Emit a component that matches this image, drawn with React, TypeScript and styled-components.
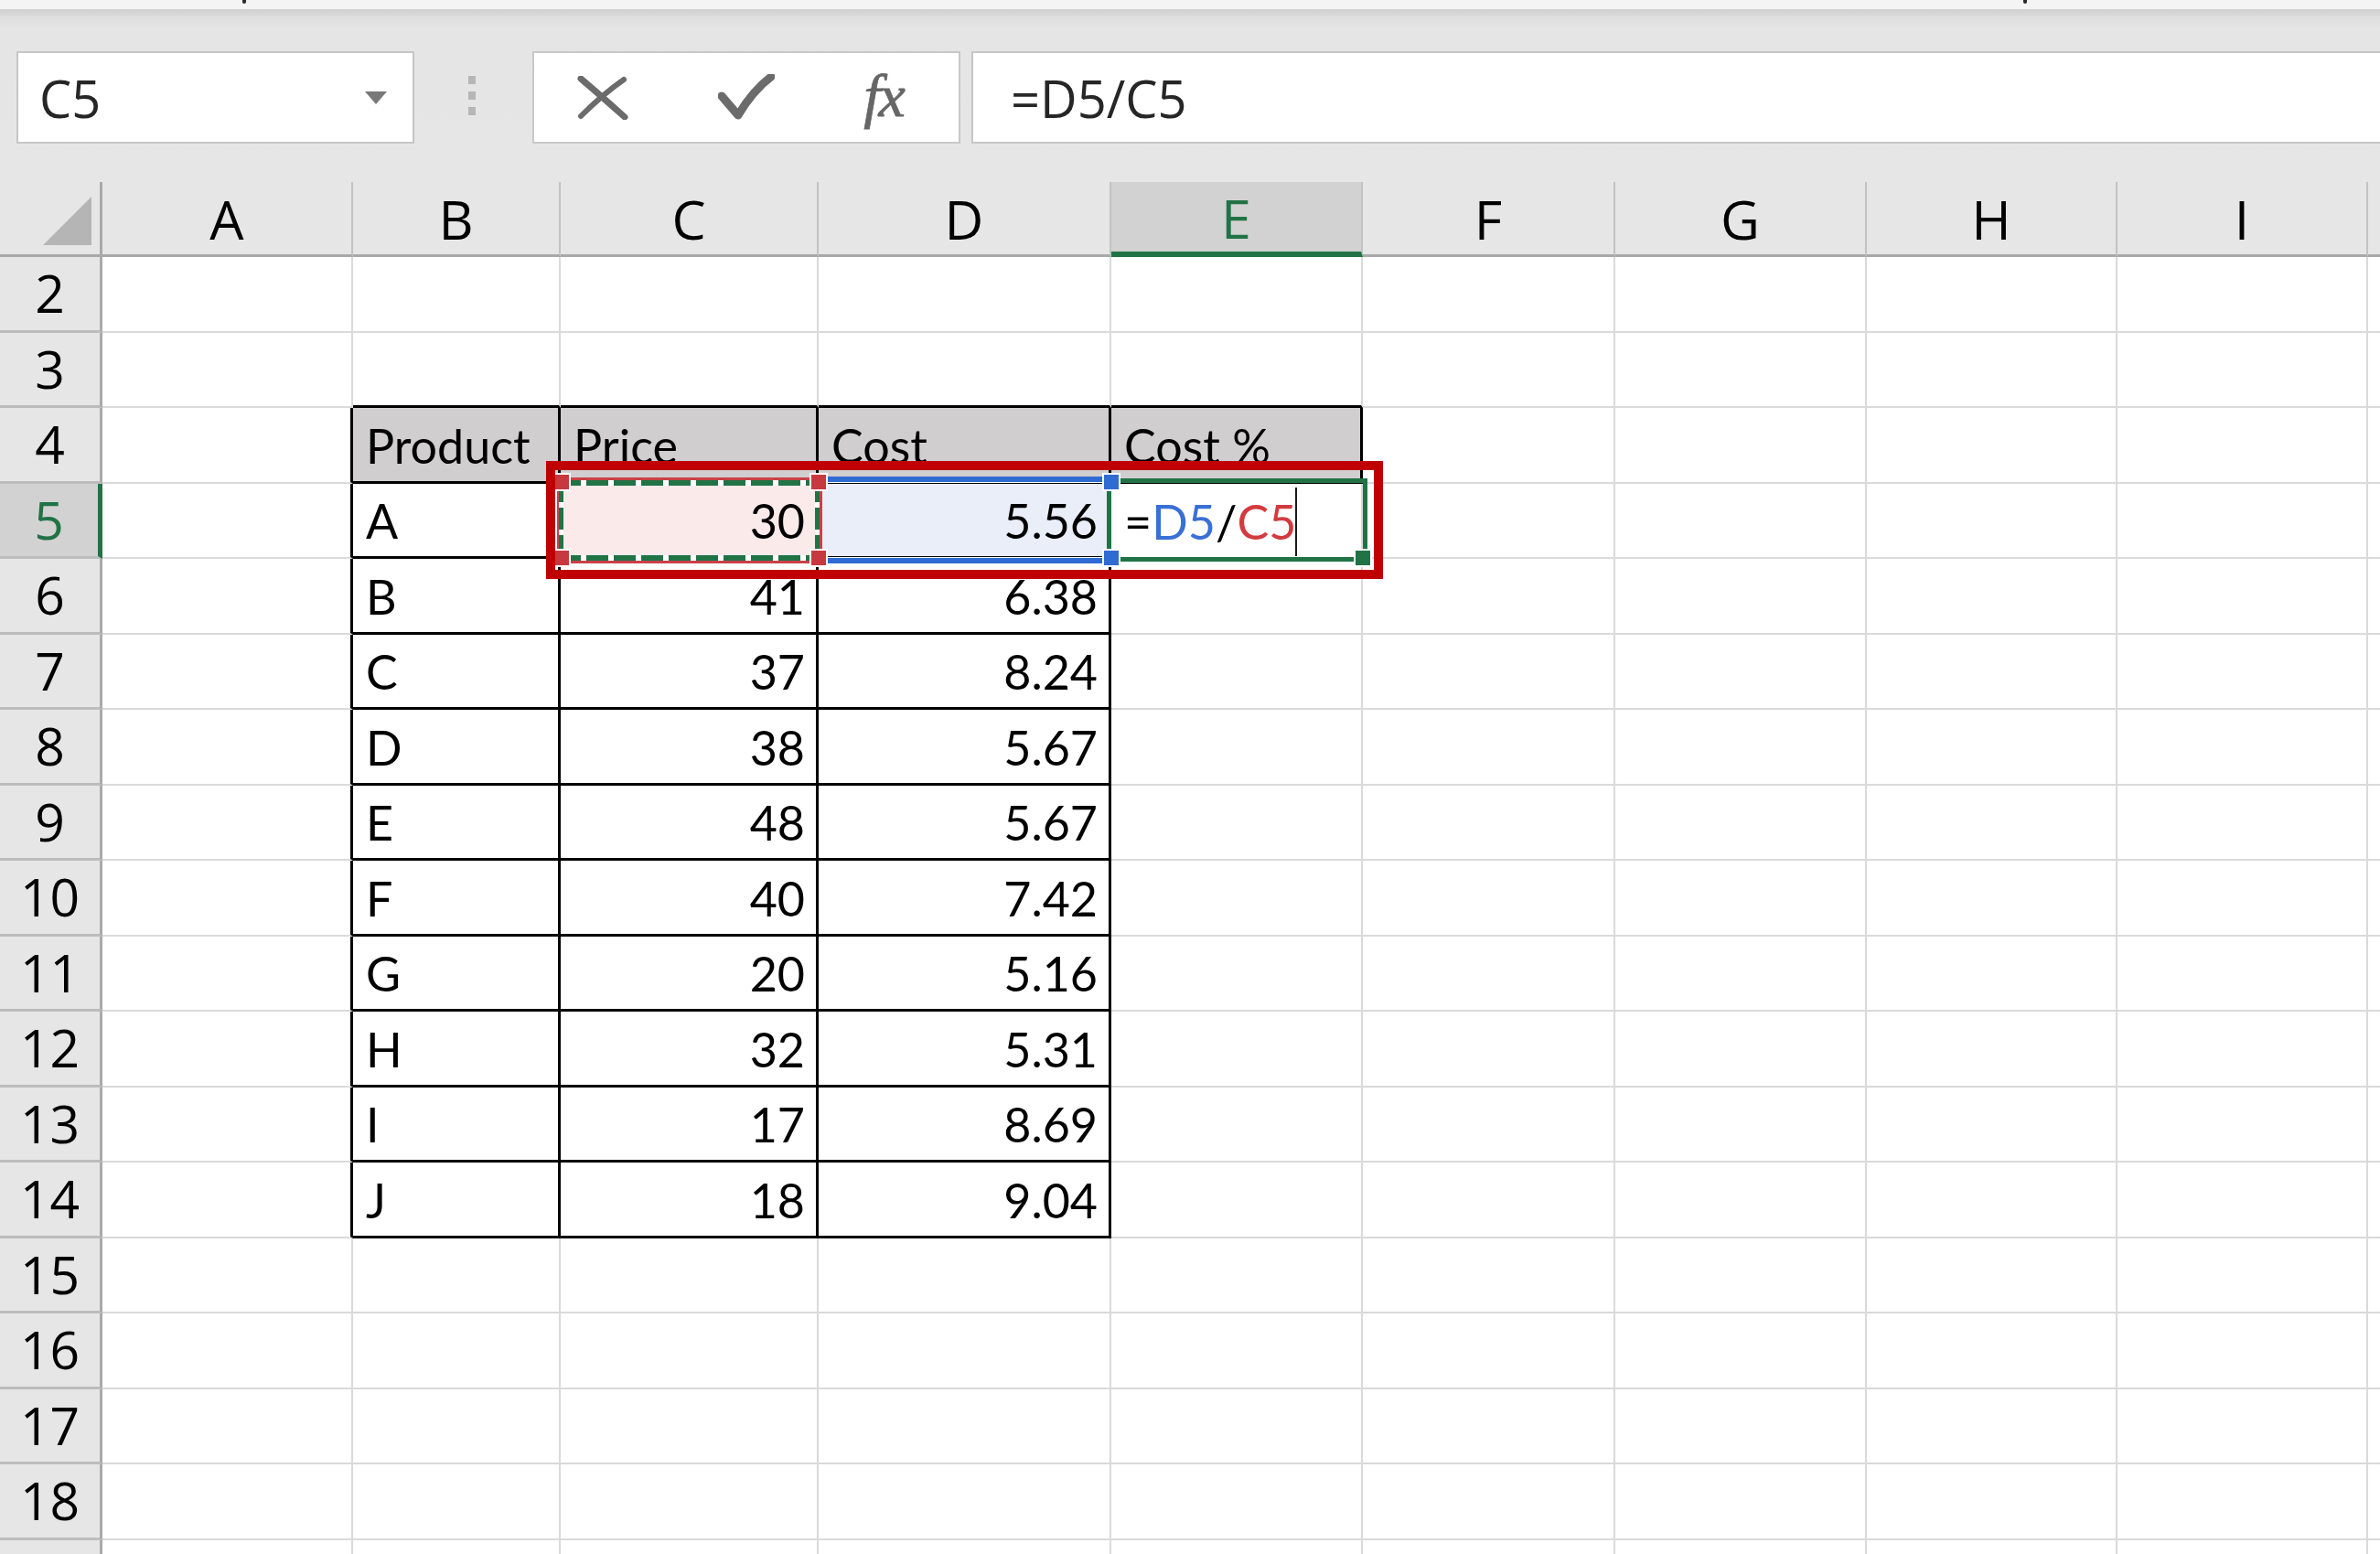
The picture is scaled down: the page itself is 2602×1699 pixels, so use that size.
import React from "react";
import styled, { createGlobalStyle, css } from "styled-components";

const GlobalStyle = createGlobalStyle`
  html, body { margin: 0; padding: 0; background: #ffffff; overflow: hidden; }
  #root { width: 2602px; height: 1699px; overflow: hidden; }
`;

const SHEET_TOP = 199;
const COLS = [112, 274, 227, 282, 320, 275, 276, 275, 274, 274, 274];
const LETTERS = ["A", "B", "C", "D", "E", "F", "G", "H", "I", "J"];
const GREEN = "#217346";

const Page = styled.div`
  width: 2602px;
  height: 1699px;
  display: flex;
  flex-direction: column;
  overflow: hidden;
  font-family: "Open Sans", "Noto Sans", sans-serif;
  background: #ffffff;
`;

const TopStrip = styled.div`
  flex: none;
  height: 10px;
  background: #f4f4f4;
  display: flex;
  align-items: flex-start;
`;

const Tick = styled.span<{ $gap: number }>`
  margin-left: ${(p) => p.$gap}px;
  width: 4px;
  height: 4px;
  background: #2a2a2a;
  border-radius: 0 0 2px 2px;
`;

const FormulaBar = styled.div`
  flex: none;
  height: 189px;
  box-sizing: border-box;
  padding: 46px 0 0 18px;
  background: linear-gradient(#cfcfcf 0px, #dedede 9px, #e5e5e5 20px, #e6e6e6 100%);
  display: flex;
  align-items: flex-start;
`;

const NameBox = styled.div`
  flex: none;
  width: 435px;
  height: 101px;
  box-sizing: border-box;
  border: 2px solid #c6c6c6;
  background: #ffffff;
  display: flex;
  align-items: center;
  justify-content: space-between;
  padding: 0 28px 0 23px;
  font-size: 56px;
  line-height: 1;
  color: #262626;
`;

const DropCaret = styled.span`
  width: 0;
  height: 0;
  border-left: 12px solid transparent;
  border-right: 12px solid transparent;
  border-top: 14px solid #787878;
`;

const DragHandle = styled.div`
  flex: none;
  margin: 27px 0 0 59px;
  display: flex;
  flex-direction: column;
  gap: 8px;
`;

const DragDot = styled.span`
  width: 8px;
  height: 9px;
  background: #b6b6b6;
`;

const ButtonsBox = styled.div`
  flex: none;
  margin-left: 62px;
  width: 468px;
  height: 101px;
  box-sizing: border-box;
  border: 2px solid #c8c8c8;
  background: #ffffff;
  display: grid;
  grid-template-columns: 150px 164px 136px;
  align-items: center;
`;

const IconSlot = styled.div`
  display: flex;
  align-items: center;
  justify-content: center;
  height: 100%;
`;

const FxText = styled.span`
  font-family: "Liberation Serif", "DejaVu Serif", serif;
  font-style: italic;
  font-size: 66px;
  line-height: 1;
  color: #666666;
  letter-spacing: -2px;
  margin-top: -4px;
  -webkit-text-stroke: 0.8px #666666;
`;

const FormulaInput = styled.div`
  flex: 1;
  margin: 0 -20px 0 12px;
  height: 101px;
  box-sizing: border-box;
  border: 2px solid #c6c6c6;
  background: #ffffff;
  display: flex;
  align-items: center;
  padding-left: 41px;
  font-size: 56px;
  line-height: 1;
  color: #262626;
`;

const Sheet = styled.div`
  position: relative;
  flex: none;
  display: grid;
  grid-template-columns: ${COLS.map((c) => `${c}px`).join(" ")};
  grid-template-rows: 82px repeat(18, 82.5px);
`;

const Corner = styled.div`
  box-sizing: border-box;
  background: #e6e6e6;
  border-right: 3px solid #a9a9a9;
  border-bottom: 3px solid #a9a9a9;
  display: flex;
  align-items: flex-end;
  justify-content: flex-end;
  padding: 0 9px 10px 0;
`;

const CornerTriangle = styled.span`
  width: 0;
  height: 0;
  border-left: 53px solid transparent;
  border-bottom: 53px solid #b5b5b5;
`;

const ColHeader = styled.div<{ $selected?: boolean }>`
  box-sizing: border-box;
  display: flex;
  align-items: center;
  justify-content: center;
  font-size: 59px;
  line-height: 1;
  padding-top: 2px;
  border-right: 2px solid #c2c2c2;
  ${(p) =>
    p.$selected
      ? css`
          background: #d2d2d2;
          color: ${GREEN};
          border-bottom: 6px solid ${GREEN};
        `
      : css`
          background: #e6e6e6;
          color: #000000;
          border-bottom: 3px solid #a9a9a9;
        `}
`;

const RowHeader = styled.div<{ $selected?: boolean }>`
  box-sizing: border-box;
  display: flex;
  align-items: center;
  justify-content: center;
  font-size: 57px;
  line-height: 1;
  border-bottom: 3px solid #bcbcbc;
  ${(p) =>
    p.$selected
      ? css`
          background: #d2d2d2;
          color: ${GREEN};
          border-right: 5px solid ${GREEN};
        `
      : css`
          background: #e6e6e6;
          color: #000000;
          border-right: 3px solid #a9a9a9;
        `}
`;

const Cell = styled.div<{
  $bg?: string;
  $blackRight?: boolean;
  $blackBottom?: boolean;
  $alignRight?: boolean;
}>`
  box-sizing: border-box;
  min-width: 0;
  overflow: visible;
  white-space: nowrap;
  display: flex;
  align-items: flex-end;
  justify-content: ${(p) => (p.$alignRight ? "flex-end" : "flex-start")};
  padding: 0 12px 13px 14px;
  background: ${(p) => p.$bg || "#ffffff"};
  border-right: ${(p) => (p.$blackRight ? "3px solid #000000" : "2px solid #dadada")};
  border-bottom: ${(p) => (p.$blackBottom ? "3px solid #000000" : "2px solid #dadada")};
  font-family: "Lato", "Open Sans", sans-serif;
  font-size: 52px;
  line-height: 1;
  color: #000000;
`;

const RefText = styled.span<{ $color: string }>`
  color: ${(p) => p.$color};
`;

/* ---------- overlays (drawn on top of the grid) ---------- */

const Overlay = styled.div<{ $x: number; $y: number; $w: number; $h: number }>`
  position: absolute;
  left: ${(p) => p.$x}px;
  top: ${(p) => p.$y - SHEET_TOP}px;
  width: ${(p) => p.$w}px;
  height: ${(p) => p.$h}px;
  box-sizing: border-box;
  pointer-events: none;
`;

const CopyFrame = styled(Overlay)`
  border: 3px solid #c9414a;
  border-left-width: 2px;
`;

const dash = (deg: number) =>
  `repeating-linear-gradient(${deg}deg, ${GREEN} 0 24px, #ffffff 24px 30px)`;

const Ants = styled.div`
  position: absolute;
  inset: 0;
  background: ${dash(90)} top left / 100% 6px no-repeat, ${dash(90)} bottom left / 100% 6px no-repeat,
    ${dash(180)} top left / 5px 100% no-repeat, ${dash(180)} top right / 5px 100% no-repeat;
`;

const RefFrame = styled(Overlay)<{ $color: string }>`
  border-top: 6px solid ${(p) => p.$color};
  border-bottom: 6px solid ${(p) => p.$color};
  box-shadow: inset 0 1px 0 #ffffff, inset 0 -1px 0 #ffffff;
`;

const ActiveFrame = styled(Overlay)`
  border: 5px solid ${GREEN};
`;

const Handle = styled.div<{ $cx: number; $cy: number; $color: string }>`
  position: absolute;
  left: ${(p) => p.$cx - 8}px;
  top: ${(p) => p.$cy - 8 - SHEET_TOP}px;
  width: 16px;
  height: 16px;
  box-sizing: border-box;
  background: ${(p) => p.$color};
  outline: 2px solid #ffffff;
`;

const TextCaret = styled(Overlay)`
  background: #1a1a1a;
`;

const Annotation = styled(Overlay)`
  border: 10px solid #c00000;
`;

const PRODUCTS: [string, string, string][] = [
  ["A", "30", "5.56"],
  ["B", "41", "6.38"],
  ["C", "37", "8.24"],
  ["D", "38", "5.67"],
  ["E", "48", "5.67"],
  ["F", "40", "7.42"],
  ["G", "20", "5.16"],
  ["H", "32", "5.31"],
  ["I", "17", "8.69"],
  ["J", "18", "9.04"],
];

const HEADERS: Record<number, string> = { 2: "Product", 3: "Price", 4: "Cost", 5: "Cost %" };

function blackRight(row: number, col: number) {
  if (row >= 4 && row <= 14 && col >= 1 && col <= 4) return true;
  if (row === 4 && col === 5) return true;
  return false;
}

function blackBottom(row: number, col: number) {
  if (row >= 4 && row <= 14 && col >= 2 && col <= 4) return true;
  if (row === 3 && col >= 2 && col <= 5) return true;
  if (row === 4 && col === 5) return true;
  return false;
}

function cellContent(row: number, col: number): React.ReactNode {
  if (row === 4 && HEADERS[col]) return HEADERS[col];
  if (row >= 5 && row <= 14) {
    const p = PRODUCTS[row - 5];
    if (col === 2) return p[0];
    if (col === 3) return p[1];
    if (col === 4) return p[2];
    if (col === 5 && row === 5)
      return (
        <>
          =<RefText $color="#3a6fd6">D5</RefText>/<RefText $color="#d23b3f">C5</RefText>
        </>
      );
  }
  return null;
}

function cellBg(row: number, col: number) {
  if (row === 4 && col >= 2 && col <= 5) return "#d0cece";
  if (row === 5 && col === 3) return "#fbeaea";
  if (row === 5 && col === 4) return "#e9eef8";
  return undefined;
}

/* rows 2..18 are fully visible; row 19 only shows its top edge */
const ROWS = Array.from({ length: 18 }, (_, i) => i + 2);
const LAST_VISIBLE_ROW = 18;
const LAST_VISIBLE_COL = "I";

export default function App() {
  return (
    <>
      <GlobalStyle />
      <Page>
        <TopStrip>
          <Tick $gap={265} />
          <Tick $gap={1943} />
        </TopStrip>
        <FormulaBar>
          <NameBox>
            <span>C5</span>
            <DropCaret />
          </NameBox>
          <DragHandle>
            <DragDot />
            <DragDot />
            <DragDot />
          </DragHandle>
          <ButtonsBox>
            <IconSlot>
              <svg width="56" height="48" viewBox="0 0 56 48">
                <path d="M4 3 Q24 20 52 45" stroke="#6b6b6b" strokeWidth="7" fill="none" strokeLinecap="round" />
                <path d="M51 4 Q28 20 4 44" stroke="#6b6b6b" strokeWidth="6" fill="none" strokeLinecap="round" />
              </svg>
            </IconSlot>
            <IconSlot>
              <svg width="62" height="52" viewBox="0 0 62 52">
                <path
                  d="M4 24 L22 45 Q38 18 58 3"
                  stroke="#6b6b6b"
                  strokeWidth="9"
                  fill="none"
                  strokeLinecap="round"
                  strokeLinejoin="round"
                />
              </svg>
            </IconSlot>
            <IconSlot>
              <FxText>fx</FxText>
            </IconSlot>
          </ButtonsBox>
          <FormulaInput>=D5/C5</FormulaInput>
        </FormulaBar>

        <Sheet>
          <Corner>
            <CornerTriangle />
          </Corner>
          {LETTERS.map((l) => (
            <ColHeader key={l} $selected={l === "E"}>
              {l <= LAST_VISIBLE_COL ? l : null}
            </ColHeader>
          ))}
          {ROWS.map((row) => (
            <React.Fragment key={row}>
              <RowHeader $selected={row === 5}>{row <= LAST_VISIBLE_ROW ? row : null}</RowHeader>
              {LETTERS.map((l, i) => {
                const col = i + 1;
                return (
                  <Cell
                    key={l}
                    $bg={cellBg(row, col)}
                    $blackRight={blackRight(row, col)}
                    $blackBottom={blackBottom(row, col)}
                    $alignRight={row >= 5 && (col === 3 || col === 4)}
                  >
                    {cellContent(row, col)}
                  </Cell>
                );
              })}
            </React.Fragment>
          ))}

          <CopyFrame $x={609} $y={522} $w={290} $h={94}>
            <Ants />
          </CopyFrame>
          <RefFrame $x={903} $y={521} $w={308} $h={95} $color="#2f6bd1" />
          <ActiveFrame $x={1210} $y={523} $w={285} $h={91} />
          <TextCaret $x={1416} $y={533} $w={2} $h={75} />

          <Handle $cx={614} $cy={527} $color="#c8393f" />
          <Handle $cx={895} $cy={527} $color="#c8393f" />
          <Handle $cx={614} $cy={610} $color="#c8393f" />
          <Handle $cx={895} $cy={610} $color="#c8393f" />
          <Handle $cx={1215} $cy={527} $color="#2f6bd1" />
          <Handle $cx={1215} $cy={610} $color="#2f6bd1" />
          <Handle $cx={1490} $cy={610} $color={GREEN} />

          <Annotation $x={597} $y={504} $w={915} $h={129} />
        </Sheet>
      </Page>
    </>
  );
}
